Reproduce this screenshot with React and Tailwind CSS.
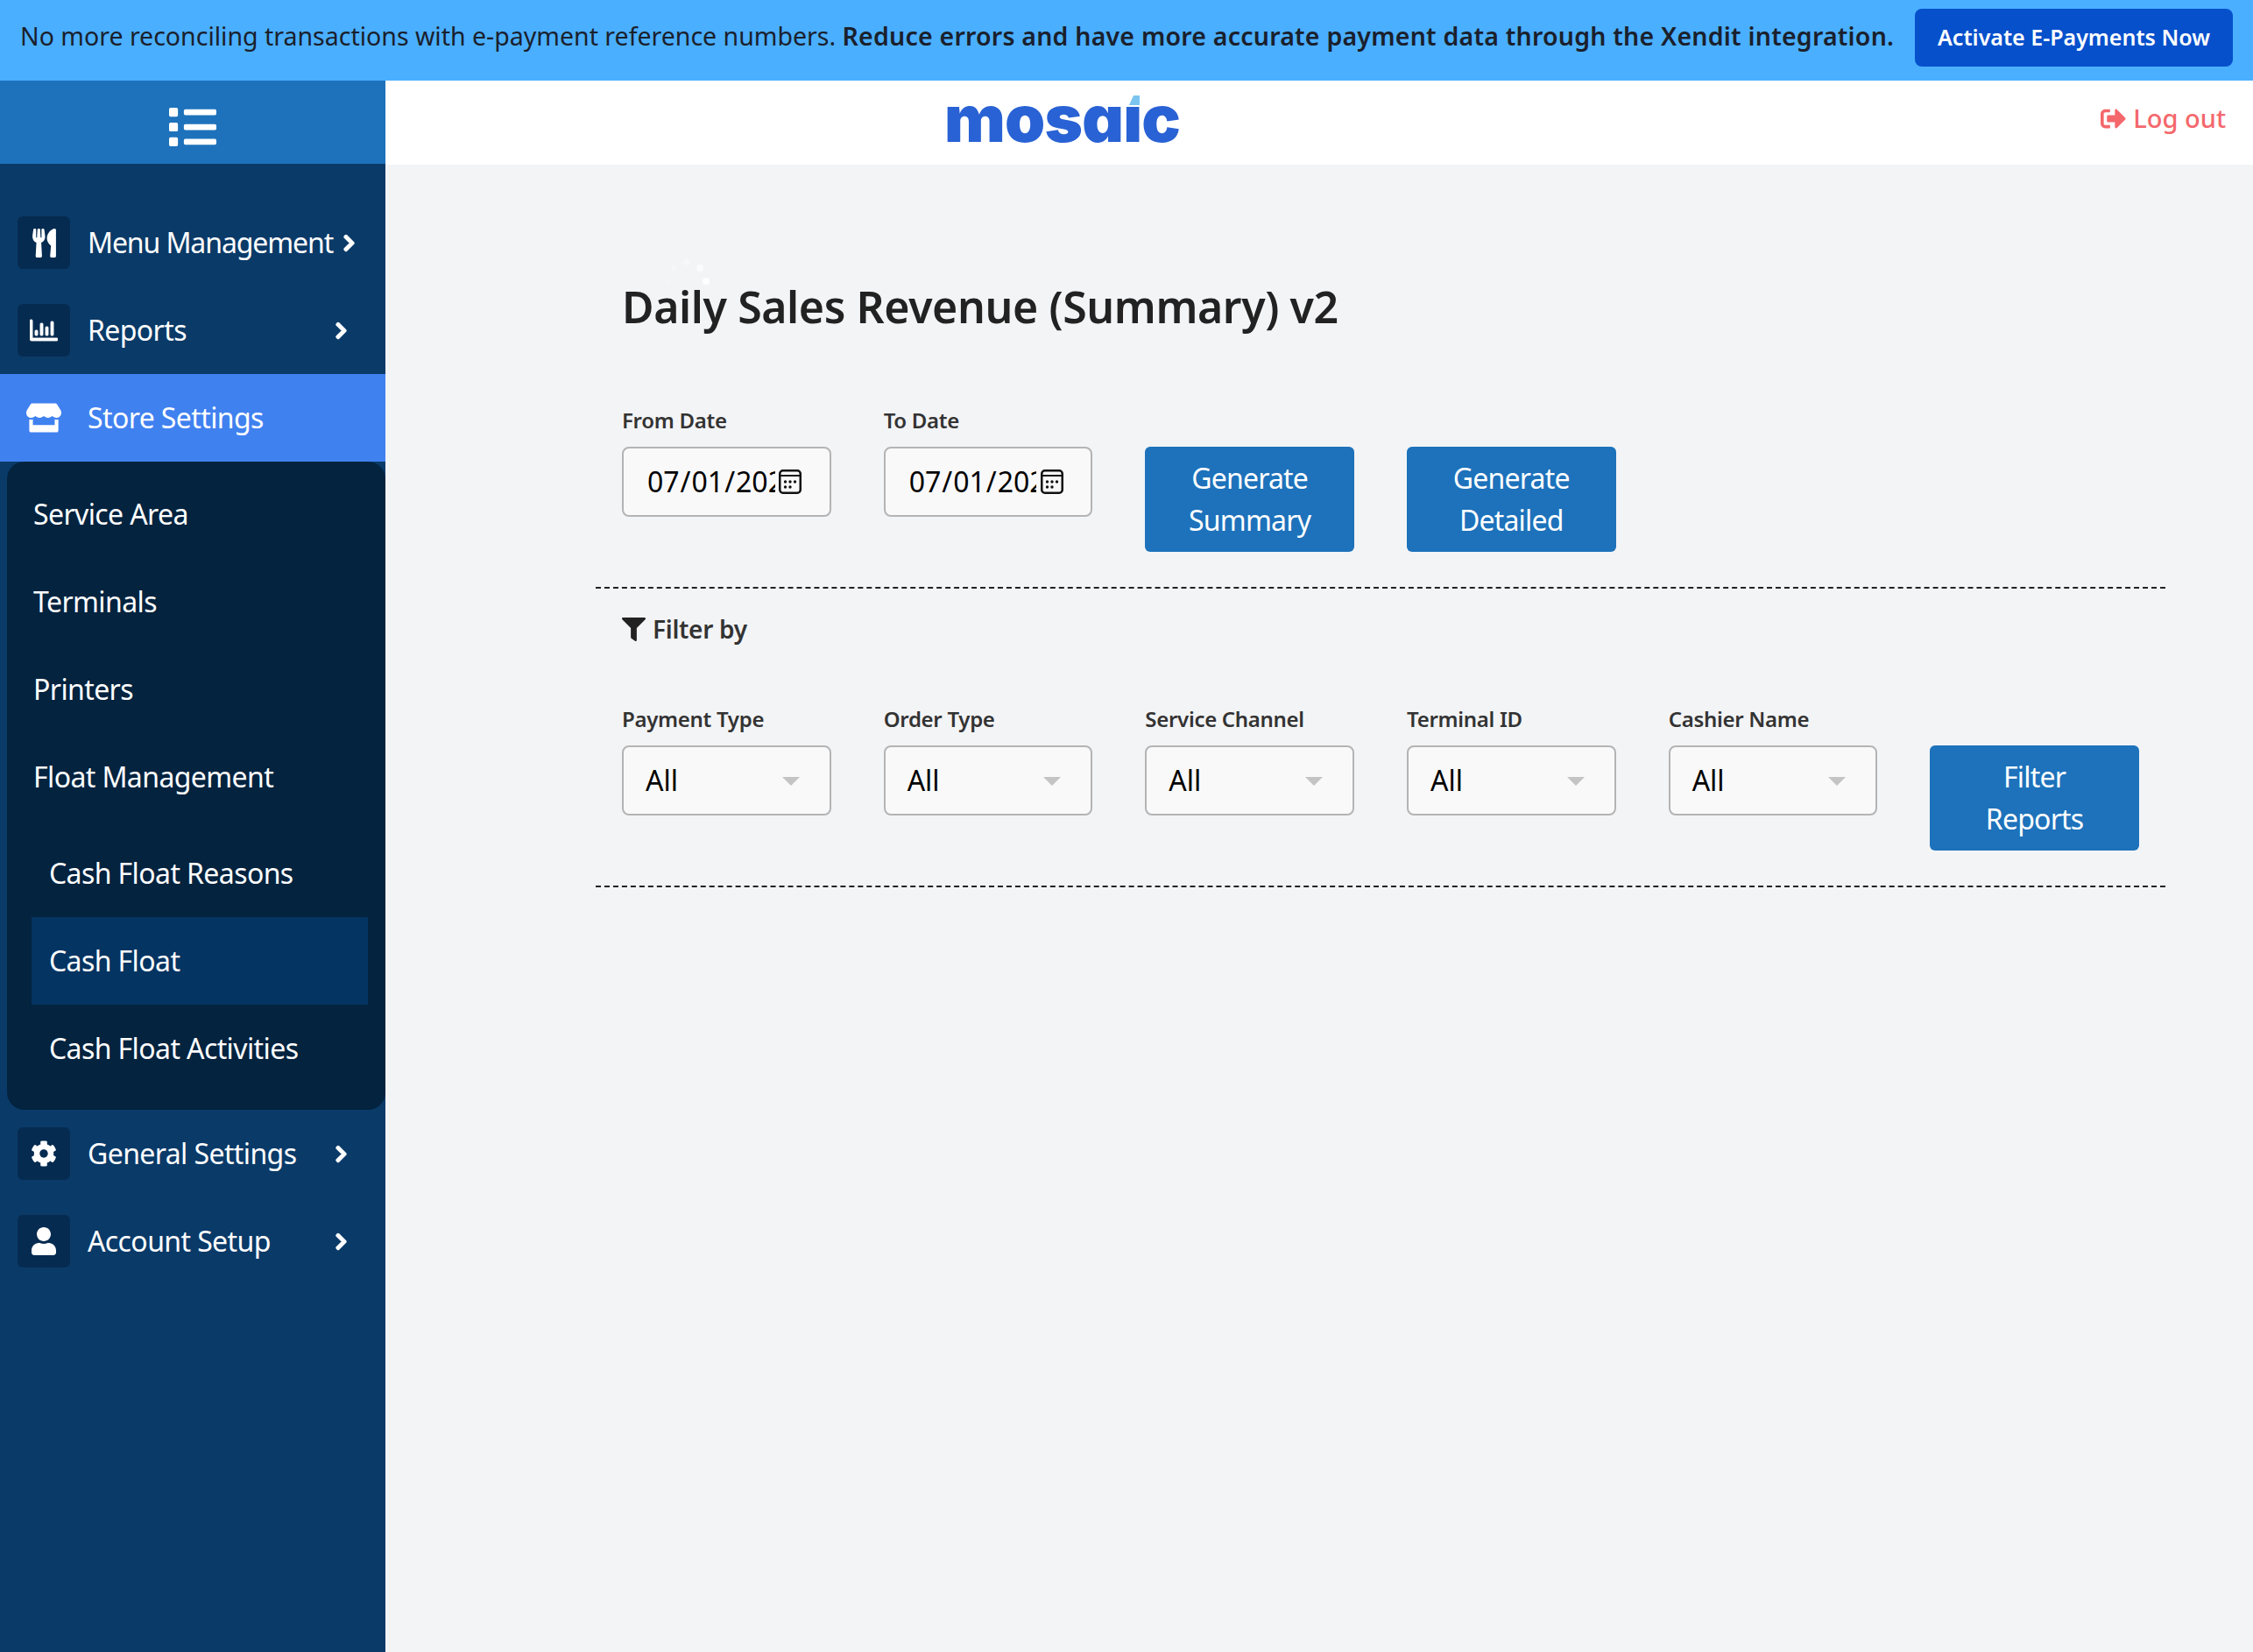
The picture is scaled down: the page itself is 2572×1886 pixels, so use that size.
import React from "react";
import {
  FaList,
  FaUtensils,
  FaRegChartBar,
  FaStore,
  FaCog,
  FaUser,
  FaChevronRight,
  FaSignOutAlt,
  FaFilter,
} from "react-icons/fa";

const NOTO = "font-['Noto_Sans',sans-serif]";

function NavItem({ icon, label, active, tight }) {
  return (
    <div className={`h-[100px] flex items-center pl-5 pr-[40px] ${active ? "bg-[#4081f0]" : ""}`}>
      <span className={`w-[60px] h-[60px] shrink-0 rounded-md flex items-center justify-center text-white ${active ? "" : "bg-[#062b50]"}`}>
        {icon}
      </span>
      <span className={`ml-5 text-[32px] text-white whitespace-nowrap ${tight ? "tracking-[-1.1px]" : "tracking-[-0.6px]"}`}>{label}</span>
      {!active && <FaChevronRight className={`text-white text-[21px] stroke-white stroke-[40] shrink-0 ${tight ? "ml-[8px] -mr-[8px]" : "ml-auto"}`} />}
    </div>
  );
}

function SubItem({ label, inset, active }) {
  return (
    <div className={`h-[100px] flex items-center text-[32px] tracking-[-0.6px] text-white ${inset ? "ml-7 mr-5 pl-5" : "pl-[30px]"} ${active ? "bg-[#043462]" : ""}`}>
      {label}
    </div>
  );
}

function Field({ label, children }) {
  return (
    <div className="w-1/6 px-[30px] shrink-0">
      <label className="block text-[24px] tracking-[-0.3px] leading-[36px] font-semibold text-[#333] mb-3 whitespace-nowrap">{label}</label>
      {children}
    </div>
  );
}

function ActionButton({ children }) {
  return (
    <button className="w-full h-[120px] rounded-md bg-[#1d72bb] text-white text-[32px] tracking-[-0.8px] leading-[48px] px-8">
      {children}
    </button>
  );
}

function DateField({ label }) {
  return (
    <Field label={label}>
      <div className="relative">
        <input
          type="date"
          defaultValue="2025-07-01"
          className="w-full h-[80px] rounded-lg border-2 border-[#b4b4b4] bg-[#f9f9f9] px-[26px] text-[32px] text-black [&::-webkit-calendar-picker-indicator]:opacity-0"
        />
        <svg className="absolute left-[178px] top-[26px] pointer-events-none" width="28" height="28" viewBox="0 0 28 28" fill="none">
          <rect x="2.25" y="1.25" width="23.5" height="25.5" rx="3.5" stroke="#111" strokeWidth="2.5" />
          <rect x="2" y="6" width="24" height="2" fill="#111" />
          <g fill="#111">
            <circle cx="8.5" cy="14" r="1.7" />
            <circle cx="14" cy="14" r="1.7" />
            <circle cx="19.5" cy="14" r="1.7" />
            <circle cx="8.5" cy="20" r="1.7" />
            <circle cx="14" cy="20" r="1.7" />
          </g>
        </svg>
      </div>
    </Field>
  );
}

function SelectField({ label }) {
  return (
    <Field label={label}>
      <div className="relative h-[80px] rounded-lg border-2 border-[#b4b4b4] bg-[#f9f9f9] pl-[25px] flex items-center text-[32px] text-black">
        All
        <span className="absolute right-[34px] top-[34px] w-0 h-0 border-x-[10px] border-x-transparent border-t-[10px] border-t-[#c4c4c4]" />
      </div>
    </Field>
  );
}

export default function App() {
  return (
    <div className={`min-h-screen flex flex-col bg-[#f3f4f6] ${NOTO}`}>
      {/* BANNER */}
      <div className="h-[92px] bg-[#4aafff] flex items-start justify-between px-[23px] pt-[10px]">
        <p className="text-[28.5px] leading-[62px] text-[#1a202c] whitespace-nowrap">
          No more reconciling transactions with e-payment reference numbers.{" "}
          <span className="font-semibold tracking-[0.22px]">Reduce errors and have more accurate payment data through the Xendit integration.</span>
        </p>
        <button className="w-[363px] h-[66px] rounded-lg bg-[#0650cc] text-white text-[25px] font-semibold">
          Activate E-Payments Now
        </button>
      </div>

      <div className="flex flex-1">
        {/* SIDEBAR */}
        <aside className="w-[440px] shrink-0 bg-[#0a3a68]">
          <div className="h-[95px] bg-[#1d72bb] flex items-center justify-center pt-[10px]">
            <FaList className="text-white text-[54px]" />
          </div>
          <div className="pt-[40px]">
            <NavItem icon={<FaUtensils className="text-[33px]" />} label="Menu Management" tight />
            <NavItem icon={<FaRegChartBar className="text-[32px] stroke-white stroke-[14]" />} label="Reports" />
            <NavItem icon={<FaStore className="text-[40px]" />} label="Store Settings" active />
            <div className="ml-2 bg-[#03233f] rounded-[20px] pt-[10px] pb-[20px]">
              <SubItem label="Service Area" />
              <SubItem label="Terminals" />
              <SubItem label="Printers" />
              <SubItem label="Float Management" />
              <div className="pt-[10px]">
                <SubItem label="Cash Float Reasons" inset />
                <SubItem label="Cash Float" inset active />
                <SubItem label="Cash Float Activities" inset />
              </div>
            </div>
            <NavItem icon={<FaCog className="text-[30px]" />} label="General Settings" />
            <NavItem icon={<FaUser className="text-[32px]" />} label="Account Setup" />
          </div>
        </aside>

        <div className="flex-1 flex flex-col">
          {/* TOP BAR */}
          <header className="relative h-[96px] bg-white flex items-center justify-end pr-[31px] pb-[10px]">
            <span className="absolute left-[638px] top-[-5px] text-[#2962d4] font-['Inter',sans-serif] font-black text-[74px] leading-[96px] tracking-[-0.8px] [font-feature-settings:'cv11']" aria-label="mosaic">
              mosaıc
            </span>
            <svg className="absolute left-[849px] top-[17px]" width="12" height="11" viewBox="0 0 12 11">
              <polygon points="5,0 12,0 12,11 0,11" fill="#7cc4f0" />
            </svg>
            <span className="flex items-center gap-2 text-[#f4686c] text-[29px] font-medium">
              <FaSignOutAlt className="text-[29px]" />
              Log out
            </span>
          </header>

          {/* CONTENT */}
          <main className="pl-[240px] pr-[100px] pt-[128px]">
            <div className="relative">
              {/* loading spinner caught mid-fade behind the title */}
              <svg className="absolute left-[80px] top-[-22px]" width="50" height="35" viewBox="0 0 50 35">
                <circle cx="46" cy="27" r="4" fill="#fff" opacity="0.95" />
                <circle cx="39" cy="12" r="4" fill="#fff" opacity="0.6" />
                <circle cx="24" cy="5" r="3.5" fill="#fff" opacity="0.4" />
                <circle cx="9" cy="12" r="3" fill="#fff" opacity="0.25" />
                <circle cx="3" cy="27" r="3" fill="#fff" opacity="0.12" />
              </svg>
              <h1 className="relative px-[30px] text-[50px] tracking-[-0.4px] leading-[68px] font-semibold text-[#222]">
                Daily Sales Revenue (Summary) v2
              </h1>
            </div>

            <div className="mt-[78px] border-b-2 border-dashed border-[#222] pb-[40px] flex">
              <DateField label="From Date" />
              <DateField label="To Date" />
              <div className="w-1/6 px-[30px] pt-[48px]"><ActionButton>Generate Summary</ActionButton></div>
              <div className="w-1/6 px-[30px] pt-[48px]"><ActionButton>Generate Detailed</ActionButton></div>
            </div>

            <div className="px-[30px] pt-[27px] flex items-center gap-[8px] text-[28px] tracking-[-0.3px] font-semibold text-[#333] leading-[38px]">
              <FaFilter className="text-[27px] text-[#222]" />
              Filter by
            </div>

            <div className="mt-[66px] border-b-2 border-dashed border-[#222] pb-[40px] flex">
              <SelectField label="Payment Type" />
              <SelectField label="Order Type" />
              <SelectField label="Service Channel" />
              <SelectField label="Terminal ID" />
              <SelectField label="Cashier Name" />
              <div className="w-1/6 px-[30px] pt-[48px]"><ActionButton>Filter Reports</ActionButton></div>
            </div>
          </main>
        </div>
      </div>
    </div>
  );
}
